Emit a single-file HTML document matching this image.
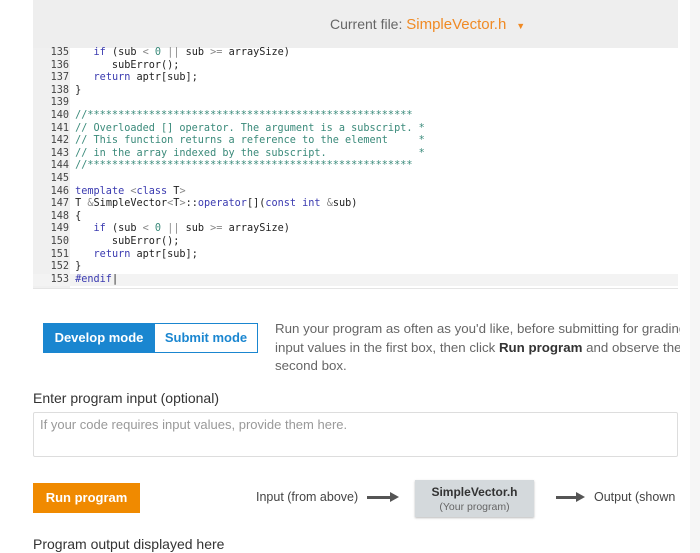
<!DOCTYPE html>
<html><head><style>
body{margin:0;width:700px;height:553px;overflow:hidden;background:#fff;font-family:"Liberation Sans",sans-serif;position:relative}
.abs{position:absolute}
.hdr{left:33px;top:0;width:645px;height:48px;background:#eeeeee}
.strip{left:690px;top:0;width:10px;height:553px;background:#f6f6f6}
.code{left:33px;top:48px;width:645px;height:240px;background:#fff;border-bottom:1px solid #e4e4e4}
.gut{left:33px;top:48px;width:37px;height:240px;background:#f0f0f0}
.ln{position:absolute;left:0;width:645px;height:12.6px;font:10.2px/12.6px "DejaVu Sans Mono","Liberation Mono",monospace;color:#222;white-space:pre}
.ln b{font-weight:normal;display:inline-block;width:36px;text-align:right;color:#444}
.k{color:#3a3ab0}.c{color:#3a8a7a}.p{color:#888}
.btn{font-weight:bold;font-size:13px;text-align:center;line-height:30px}
</style></head><body>
<div class="abs strip"></div>
<div class="abs hdr"></div>
<div class="abs" style="left:330px;top:16px;font-size:14px;color:#666">Current file: <span style="color:#f08a24;font-size:15px">SimpleVector.h</span> <span style="color:#f08a24;font-size:9px;margin-left:6px">▼</span></div>
<div class="abs code"></div>
<div class="abs gut"></div>
<div class="abs" style="left:33px;top:47px">
<div class="ln" style="top:0"><b>135</b>    <span class="k">if</span> (sub <span class="p">&lt;</span> <span class="c">0</span> <span class="p">||</span> sub <span class="p">&gt;=</span> arraySize)</div>
<div class="ln" style="top:12.6px"><b>136</b>       subError();</div>
<div class="ln" style="top:25.2px"><b>137</b>    <span class="k">return</span> aptr[sub];</div>
<div class="ln" style="top:37.8px"><b>138</b> }</div>
<div class="ln" style="top:50.4px"><b>139</b></div>
<div class="ln c" style="top:63px"><b>140</b> //*****************************************************</div>
<div class="ln c" style="top:75.6px"><b>141</b> // Overloaded [] operator. The argument is a subscript. *</div>
<div class="ln c" style="top:88.2px"><b>142</b> // This function returns a reference to the element     *</div>
<div class="ln c" style="top:100.8px"><b>143</b> // in the array indexed by the subscript.               *</div>
<div class="ln c" style="top:113.4px"><b>144</b> //*****************************************************</div>
<div class="ln" style="top:126px"><b>145</b></div>
<div class="ln" style="top:138.6px"><b>146</b> <span class="k">template</span> <span class="p">&lt;</span><span class="k">class</span> T<span class="p">&gt;</span></div>
<div class="ln" style="top:151.2px"><b>147</b> T <span class="p">&amp;</span>SimpleVector<span class="p">&lt;</span>T<span class="p">&gt;</span>::<span class="k">operator</span>[](<span class="k">const int</span> <span class="p">&amp;</span>sub)</div>
<div class="ln" style="top:163.8px"><b>148</b> {</div>
<div class="ln" style="top:176.4px"><b>149</b>    <span class="k">if</span> (sub <span class="p">&lt;</span> <span class="c">0</span> <span class="p">||</span> sub <span class="p">&gt;=</span> arraySize)</div>
<div class="ln" style="top:189px"><b>150</b>       subError();</div>
<div class="ln" style="top:201.6px"><b>151</b>    <span class="k">return</span> aptr[sub];</div>
<div class="ln" style="top:214.2px"><b>152</b> }</div>
<div class="ln" style="top:226.8px;background:#f3f3f3"><b>153</b> <span class="k">#endif</span>|</div>
</div>
<div class="abs btn" style="left:43px;top:323px;width:112px;height:30px;background:#1a86d0;color:#fff">Develop mode</div>
<div class="abs btn" style="left:155px;top:323px;width:102px;height:28px;border:1px solid #1a86d0;border-left:none;color:#1a86d0;line-height:28px">Submit mode</div>
<div class="abs" style="left:275px;top:320px;font-size:13.3px;line-height:18.5px;color:#666;width:405px;white-space:nowrap;overflow:hidden">Run your program as often as you'd like, before submitting for grading<br>input values in the first box, then click <b style="color:#333">Run program</b> and observe the p<br>second box.</div>
<div class="abs" style="left:33px;top:390px;font-size:14px;color:#333">Enter program input (optional)</div>
<div class="abs" style="left:33px;top:412px;width:643px;height:43px;border:1px solid #ddd;border-radius:2px"></div>
<div class="abs" style="left:40px;top:417px;font-size:13px;color:#999">If your code requires input values, provide them here.</div>
<div class="abs btn" style="left:33px;top:483px;width:107px;height:30px;background:#f08a00;color:#fff">Run program</div>
<div class="abs" style="left:256px;top:490px;font-size:12.5px;color:#444">Input (from above)</div>
<div class="abs" style="left:367px;top:496px;width:24px;height:3px;background:#555"></div>
<div class="abs" style="left:390px;top:492px;width:0;height:0;border-left:9px solid #555;border-top:5.5px solid transparent;border-bottom:5.5px solid transparent"></div>
<div class="abs" style="left:415px;top:480px;width:119px;height:37px;background:#d4d9dc;box-shadow:0 1px 2px #bbb;text-align:center">
<div style="font-size:12px;font-weight:bold;color:#333;margin-top:5px">SimpleVector.h</div>
<div style="font-size:10.5px;color:#666;margin-top:2px">(Your program)</div></div>
<div class="abs" style="left:556px;top:496px;width:21px;height:3px;background:#555"></div>
<div class="abs" style="left:576px;top:492px;width:0;height:0;border-left:9px solid #555;border-top:5.5px solid transparent;border-bottom:5.5px solid transparent"></div>
<div class="abs" style="left:594px;top:490px;font-size:12.5px;color:#444;width:85px;overflow:hidden;white-space:nowrap">Output (shown below)</div>
<div class="abs" style="left:33px;top:536px;font-size:14px;color:#333">Program output displayed here</div>
</body></html>
